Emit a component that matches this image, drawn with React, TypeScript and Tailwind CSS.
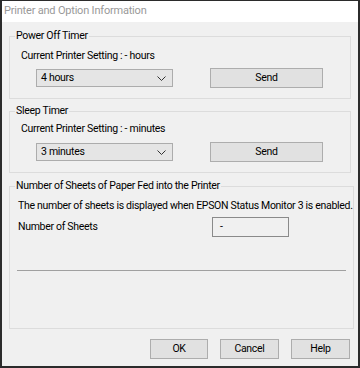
import React from 'react';

const font = { fontFamily: 'Roboto, "Liberation Sans", Arial, sans-serif' };

const Chevron = () => (
  <svg width="9" height="5" viewBox="0 0 9 5" className="text-[#333]">
    <path d="M0.5 0.5 L4.5 4.5 L8.5 0.5" fill="none" stroke="currentColor" strokeWidth="1" />
  </svg>
);

type SelectProps = { value: string };

const Select = ({ value }: SelectProps) => (
  <div className="flex h-[18px] w-[137px] items-center justify-between border border-[#acacac] bg-[#e5e5e5] pl-[4px] pr-[6px]">
    <span>{value}</span>
    <Chevron />
  </div>
);

const Button = ({ label, className }: { label: string; className: string }) => (
  <button className={`flex h-[20px] items-center justify-center border border-[#adadad] bg-[#e1e1e1] ${className}`}>
    {label}
  </button>
);

type GroupProps = {
  title: string;
  className?: string;
  children: React.ReactNode;
};

const Group = ({ title, className, children }: GroupProps) => (
  <fieldset className={`mx-[7px] border border-[#dcdcdc] px-0 ${className ?? ''}`}>
    <legend className="ml-[5px] px-[1px] leading-[16px]">{title}</legend>
    {children}
  </fieldset>
);

type TimerGroupProps = {
  title: string;
  unit: string;
  value: string;
  className?: string;
  textClass: string;
  rowClass: string;
};

const TimerGroup = ({ title, unit, value, className, textClass, rowClass }: TimerGroupProps) => (
  <Group title={title} className={className}>
    <div className={`pl-[11px] leading-[16px] ${textClass}`}>Current Printer Setting : - {unit}</div>
    <div className={`flex items-center pb-[10px] pl-[26px] ${rowClass}`}>
      <Select value={value} />
      <Button label="Send" className="ml-[37px] w-[113px]" />
    </div>
  </Group>
);

export default function App() {
  return (
    <div
      className="flex h-[368px] w-[360px] flex-col overflow-hidden border-x-2 border-b-2 border-t border-[#2b2b2b] bg-[#f0f0f0] text-[10.5px] tracking-[-0.3px] text-black"
      style={font}
    >
      <div className="flex h-[21px] shrink-0 items-center bg-white pl-[2px] text-[11px] tracking-[-0.2px] text-[#999]">
        Printer and Option Information
      </div>
      <div className="mt-[6px] flex flex-col">
        <TimerGroup
          title="Power Off Timer"
          unit="hours"
          value="4 hours"
          textClass="pt-[4px]"
          rowClass="mt-[4px]"
        />
        <TimerGroup
          title="Sleep Timer"
          unit="minutes"
          value="3 minutes"
          className="mt-[4px]"
          textClass="pt-[2px]"
          rowClass="mt-[5px]"
        />
        <Group title="Number of Sheets of Paper Fed into the Printer" className="mt-[5px] h-[151px]">
          <div className="whitespace-nowrap pl-[8px] pt-[4px] leading-[16px]">
            The number of sheets is displayed when EPSON Status Monitor 3 is enabled.
          </div>
          <div className="mt-[3px] flex items-center pl-[8px]">
            <span className="w-[194px] leading-[16px]">Number of Sheets</span>
            <div className="flex h-[20px] w-[77px] items-center border border-[#8a8a8a] bg-[#f0f0f0] pl-[7px]">-</div>
          </div>
          <div className="mx-[7px] mt-[33px] h-px bg-[#a0a0a0]" />
        </Group>
        <div className="mt-[10px] flex justify-end gap-[12px] pr-[8px]">
          <Button label="OK" className="w-[58px]" />
          <Button label="Cancel" className="w-[59px]" />
          <Button label="Help" className="w-[59px]" />
        </div>
      </div>
    </div>
  );
}
